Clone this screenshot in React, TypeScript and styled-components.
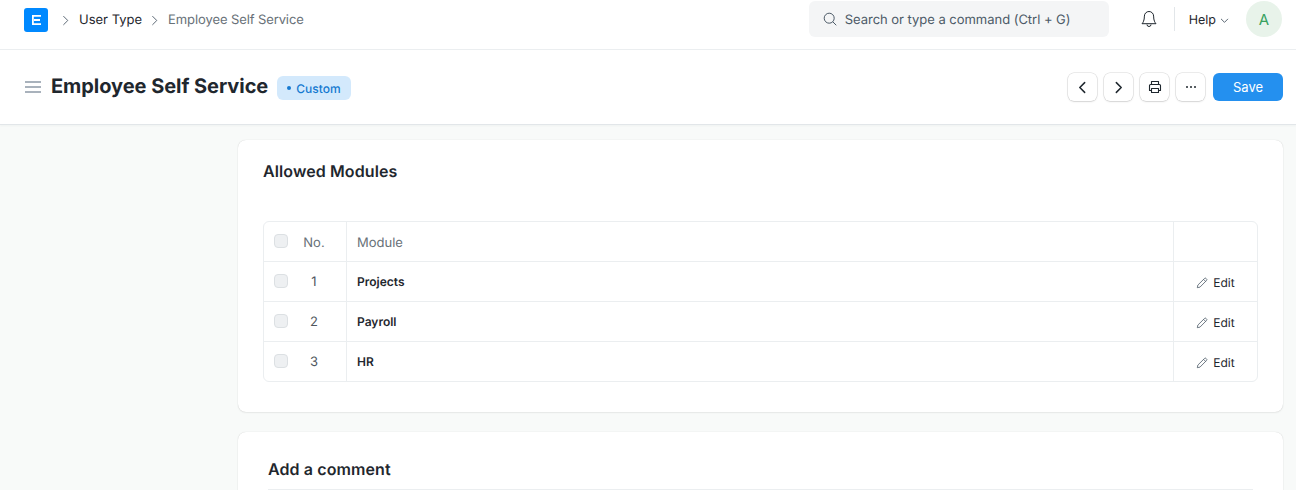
import styled, { createGlobalStyle } from 'styled-components';

const GlobalStyle = createGlobalStyle`
    html, body {
        margin: 0;
        height: 490px;
        overflow: hidden;
        background: #f8faf9;
        font-family: Inter, 'Noto Sans', sans-serif;
        color: #1f272e;
        text-rendering: geometricPrecision;
    }
    * {
        box-sizing: border-box;
    }
`;

const Navbar = styled.header`
    height: 50px;
    padding: 0 14px 0 24px;
    display: flex;
    align-items: flex-start;
    background: #fff;
    border-bottom: 1px solid #ebeef0;
`;

const Logo = styled.div`
    width: 24px;
    height: 24px;
    margin-top: 8px;
    border-radius: 3px;
    background: #0089ff;
    display: flex;
    align-items: center;
    justify-content: center;
`;

const Breadcrumbs = styled.nav`
    height: 39px;
    padding-top: 1px;
    margin-left: 12px;
    display: flex;
    align-items: center;
    font-size: 13px;
`;

const Crumb = styled.span<{ $current?: boolean }>`
    color: ${(props) => (props.$current ? '#687178' : '#1f272e')};
    letter-spacing: ${(props) => (props.$current ? '-0.1px' : '0')};
    margin-left: 8px;
    margin-right: 7px;
`;

const SearchBox = styled.div`
    width: 300px;
    height: 36px;
    margin-top: 1px;
    margin-left: auto;
    padding-left: 14px;
    display: flex;
    align-items: center;
    gap: 8px;
    border-radius: 6px;
    background: #f4f5f6;
    font-size: 13px;
    color: #4c5a67;
`;

const SearchText = styled.span`
    margin-top: 2px;
    letter-spacing: -0.03px;
`;

const BellWrap = styled.div`
    height: 38px;
    margin-left: 32px;
    display: flex;
    align-items: center;
`;

const NavDivider = styled.div`
    width: 1px;
    height: 24px;
    margin: 7px 14px 0 17px;
    background: #e2e6e9;
`;

const HelpMenu = styled.div`
    height: 38px;
    padding-top: 2px;
    display: flex;
    align-items: center;
    gap: 3px;
    font-size: 12.5px;
    color: #1f272e;
`;

const Avatar = styled.div`
    width: 36px;
    height: 36px;
    margin-top: 1px;
    margin-left: 16px;
    border-radius: 50%;
    background: #e8f3ea;
    color: #38a160;
    font-size: 15px;
    display: flex;
    align-items: center;
    justify-content: center;
`;

const PageHead = styled.div`
    height: 75px;
    padding: 0 13px 0 25px;
    display: flex;
    align-items: center;
    background: #fff;
    border-bottom: 1px solid #e2e6e9;
    box-shadow: 0 1px 2px rgba(25, 39, 52, 0.04);
`;

const Title = styled.h1`
    margin: 0 9px 2px 10px;
    font-size: 20px;
    line-height: 24px;
    font-weight: 700;
    letter-spacing: -0.05px;
    color: #1f272e;
`;

const Badge = styled.div`
    height: 24px;
    width: 74px;
    margin-top: 2px;
    padding-left: 10px;
    display: flex;
    align-items: center;
    gap: 5px;
    border-radius: 6px;
    background: #d3e9fc;
    color: #1579d0;
    font-size: 12px;
    font-weight: 500;
`;

const BadgeDot = styled.span`
    width: 4px;
    height: 4px;
    border-radius: 50%;
    background: #1579d0;
`;

const Actions = styled.div`
    margin-left: auto;
    display: flex;
    align-items: center;
    gap: 7px;
`;

const IconButton = styled.button`
    width: 29px;
    height: 28px;
    padding: 0;
    display: flex;
    align-items: center;
    justify-content: center;
    border: none;
    border-radius: 6px;
    background: #fff;
    box-shadow:
        0 0 0 0.5px rgba(0, 0, 0, 0.15),
        0 1px 2px rgba(0, 0, 0, 0.1);
`;

const SaveButton = styled.button`
    width: 70px;
    height: 28px;
    margin-left: 1px;
    border: none;
    border-radius: 6px;
    background: #2490ef;
    color: #fff;
    font-family: Inter, sans-serif;
    font-size: 13px;
`;

const Main = styled.main`
    padding: 15px 13px 0 238px;
    display: flex;
    flex-direction: column;
    gap: 20px;
`;

const Card = styled.section`
    background: #fff;
    border-radius: 8px;
    box-shadow:
        0 0 1px rgba(0, 0, 0, 0.2),
        0 1px 2px rgba(0, 0, 0, 0.06);
`;

const ModulesCard = styled(Card)`
    height: 272px;
    padding: 21px 25px 0;
`;

const SectionTitle = styled.h2`
    margin: 0;
    font-size: 16px;
    line-height: 20px;
    font-weight: 600;
    letter-spacing: 0.1px;
    color: #1f272e;
`;

const Table = styled.div`
    margin-top: 40px;
    border: 1px solid #ebeef0;
    border-radius: 6px;
`;

const Row = styled.div<{ $last?: boolean }>`
    height: ${(props) => (props.$last ? '39px' : '40px')};
    display: grid;
    grid-template-columns: 83px 1fr 83px;
    border-bottom: ${(props) => (props.$last ? 'none' : '1px solid #ebeef0')};
`;

const IndexCell = styled.div`
    display: flex;
    align-items: center;
    padding-left: 10px;
    border-right: 1px solid #ebeef0;
`;

const Checkbox = styled.span`
    width: 14px;
    height: 14px;
    margin-bottom: 1px;
    border-radius: 4px;
    background: #eef0f2;
    border: 1px solid #dce0e3;
`;

const RowNumber = styled.span<{ $head?: boolean }>`
    width: 30px;
    margin-left: 11px;
    margin-top: ${(props) => (props.$head ? '2px' : '0')};
    text-align: center;
    font-size: 13px;
    color: ${(props) => (props.$head ? '#687178' : '#50575e')};
`;

const ModuleCell = styled.div<{ $head?: boolean }>`
    display: flex;
    align-items: center;
    padding-left: 10px;
    padding-top: ${(props) => (props.$head ? '2px' : '0')};
    font-size: ${(props) => (props.$head ? '13px' : '12px')};
    font-weight: ${(props) => (props.$head ? 400 : 600)};
    color: ${(props) => (props.$head ? '#687178' : '#1f272e')};
    border-right: 1px solid #ebeef0;
`;

const EditCell = styled.div`
    display: flex;
    align-items: center;
    justify-content: center;
    padding-top: 2px;
    gap: 5px;
    font-size: 12px;
    color: #1f272e;
`;

const CommentCard = styled(Card)`
    height: 80px;
    padding: 27px 30px 0;
`;

const CommentRule = styled.div`
    height: 1px;
    margin-top: 10px;
    background: #ebeef0;
`;

const modules = ['Projects', 'Payroll', 'HR'];

const Chevron = ({ size = 12, dir = 'right', color = '#4c5a67', width = 1 }: { size?: number; dir?: string; color?: string; width?: number }) => (
    <svg width={size} height={size} viewBox="0 0 12 12" fill="none" stroke={color} strokeWidth={width} strokeLinecap="round" strokeLinejoin="round">
        {dir === 'right' && <path d="M4 1.5 8.5 6 4 10.5" />}
        {dir === 'left' && <path d="M8 1.5 3.5 6 8 10.5" />}
        {dir === 'down' && <path d="M2.5 4.5 6 8l3.5-3.5" />}
    </svg>
);

const PencilIcon = () => (
    <svg width="12" height="12" viewBox="0 0 12 12" fill="none" stroke="#4c5a67" strokeWidth="0.8" strokeLinejoin="round">
        <path d="M1.3 10.7 1.9 8 8.6 1.4a1 1 0 0 1 1.4 0l.6.6a1 1 0 0 1 0 1.4L4 10.1z" />
        <path d="M7.6 2.4 9.6 4.4" />
    </svg>
);

const App = () => {
    return (
        <>
            <GlobalStyle />
            <Navbar>
                <Logo>
                    <svg width="9" height="10" viewBox="0 0 9 10" fill="none" stroke="#fff" strokeWidth="1.8">
                        <path d="M9 .9H.9v8.2H9M2 5h6" />
                    </svg>
                </Logo>
                <Breadcrumbs>
                    <Chevron size={11} />
                    <Crumb>User Type</Crumb>
                    <Chevron size={11} />
                    <Crumb $current>Employee Self Service</Crumb>
                </Breadcrumbs>
                <SearchBox>
                    <svg width="14" height="14" viewBox="0 0 14 14" fill="none" stroke="#4c5a67" strokeWidth="1">
                        <circle cx="6.2" cy="6.2" r="5" />
                        <path d="m10 10 3 3" strokeLinecap="round" />
                    </svg>
                    <SearchText>Search or type a command (Ctrl + G)</SearchText>
                </SearchBox>
                <BellWrap>
                    <svg width="16" height="18" viewBox="0 0 16 18" fill="none" stroke="#1f272e" strokeWidth="1" strokeLinejoin="round">
                        <path d="M8 1.5a4.6 4.6 0 0 0-4.6 4.6c0 4.4-1.4 6.6-2.4 7.6h14c-1-1-2.4-3.2-2.4-7.6A4.6 4.6 0 0 0 8 1.5z" />
                        <path d="M6 14.5a2 2 0 0 0 4 0" />
                    </svg>
                </BellWrap>
                <NavDivider />
                <HelpMenu>
                    Help
                    <Chevron size={11} dir="down" />
                </HelpMenu>
                <Avatar>A</Avatar>
            </Navbar>
            <PageHead>
                <svg width="16" height="12" viewBox="0 0 16 12" fill="none" stroke="#8d99a6" strokeWidth="1.5">
                    <path d="M0 1h16M0 6h16M0 11h16" />
                </svg>
                <Title>Employee Self Service</Title>
                <Badge>
                    <BadgeDot />
                    Custom
                </Badge>
                <Actions>
                    <IconButton>
                        <Chevron size={13} dir="left" color="#1f272e" width={1.4} />
                    </IconButton>
                    <IconButton>
                        <Chevron size={13} color="#1f272e" width={1.4} />
                    </IconButton>
                    <IconButton>
                        <svg width="14" height="14" viewBox="0 0 14 14" fill="none" stroke="#1f272e" strokeWidth="1.1" strokeLinejoin="round">
                            <path d="M3.5 4.5V1.5h7v3" />
                            <path d="M3.5 10.5H1.5v-5a1 1 0 0 1 1-1h9a1 1 0 0 1 1 1v5h-2" />
                            <path d="M3.5 8.5h7v4h-7z" />
                        </svg>
                    </IconButton>
                    <IconButton>
                        <svg width="12" height="4" viewBox="0 0 12 4" fill="#1f272e">
                            <circle cx="2" cy="2" r="1" />
                            <circle cx="6" cy="2" r="1" />
                            <circle cx="10" cy="2" r="1" />
                        </svg>
                    </IconButton>
                    <SaveButton>Save</SaveButton>
                </Actions>
            </PageHead>
            <Main>
                <ModulesCard>
                    <SectionTitle>Allowed Modules</SectionTitle>
                    <Table>
                        <Row>
                            <IndexCell>
                                <Checkbox />
                                <RowNumber $head>No.</RowNumber>
                            </IndexCell>
                            <ModuleCell $head>Module</ModuleCell>
                            <EditCell />
                        </Row>
                        {modules.map((name, index) => (
                            <Row key={name} $last={index === modules.length - 1}>
                                <IndexCell>
                                    <Checkbox />
                                    <RowNumber>{index + 1}</RowNumber>
                                </IndexCell>
                                <ModuleCell>{name}</ModuleCell>
                                <EditCell>
                                    <PencilIcon />
                                    Edit
                                </EditCell>
                            </Row>
                        ))}
                    </Table>
                </ModulesCard>
                <CommentCard>
                    <SectionTitle>Add a comment</SectionTitle>
                    <CommentRule />
                </CommentCard>
            </Main>
        </>
    );
};

export default App;
